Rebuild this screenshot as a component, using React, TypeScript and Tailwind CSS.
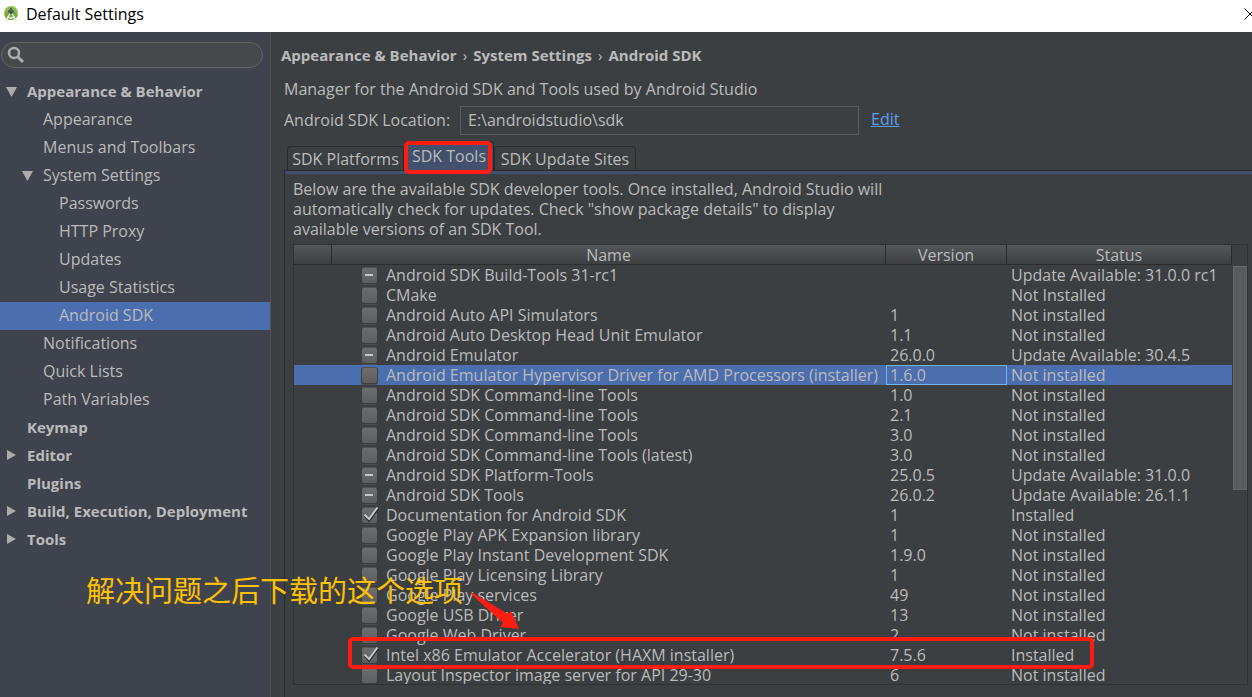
import { useState } from "react";

type CheckState = "on" | "off" | "mixed";

const treeItems = [
  { label: "Appearance & Behavior", level: 0, arrow: "down" },
  { label: "Appearance", level: 1 },
  { label: "Menus and Toolbars", level: 1 },
  { label: "System Settings", level: 1, arrow: "down" },
  { label: "Passwords", level: 2 },
  { label: "HTTP Proxy", level: 2 },
  { label: "Updates", level: 2 },
  { label: "Usage Statistics", level: 2 },
  { label: "Android SDK", level: 2 },
  { label: "Notifications", level: 1 },
  { label: "Quick Lists", level: 1 },
  { label: "Path Variables", level: 1 },
  { label: "Keymap", level: 0 },
  { label: "Editor", level: 0, arrow: "right" },
  { label: "Plugins", level: 0 },
  { label: "Build, Execution, Deployment", level: 0, arrow: "right" },
  { label: "Tools", level: 0, arrow: "right" },
];

const tools: { name: string; version: string; status: string; check: CheckState }[] = [
  { name: "Android SDK Build-Tools 31-rc1", version: "", status: "Update Available: 31.0.0 rc1", check: "mixed" },
  { name: "CMake", version: "", status: "Not Installed", check: "off" },
  { name: "Android Auto API Simulators", version: "1", status: "Not installed", check: "off" },
  { name: "Android Auto Desktop Head Unit Emulator", version: "1.1", status: "Not installed", check: "off" },
  { name: "Android Emulator", version: "26.0.0", status: "Update Available: 30.4.5", check: "mixed" },
  { name: "Android Emulator Hypervisor Driver for AMD Processors (installer)", version: "1.6.0", status: "Not installed", check: "off" },
  { name: "Android SDK Command-line Tools", version: "1.0", status: "Not installed", check: "off" },
  { name: "Android SDK Command-line Tools", version: "2.1", status: "Not installed", check: "off" },
  { name: "Android SDK Command-line Tools", version: "3.0", status: "Not installed", check: "off" },
  { name: "Android SDK Command-line Tools (latest)", version: "3.0", status: "Not installed", check: "off" },
  { name: "Android SDK Platform-Tools", version: "25.0.5", status: "Update Available: 31.0.0", check: "mixed" },
  { name: "Android SDK Tools", version: "26.0.2", status: "Update Available: 26.1.1", check: "mixed" },
  { name: "Documentation for Android SDK", version: "1", status: "Installed", check: "on" },
  { name: "Google Play APK Expansion library", version: "1", status: "Not installed", check: "off" },
  { name: "Google Play Instant Development SDK", version: "1.9.0", status: "Not installed", check: "off" },
  { name: "Google Play Licensing Library", version: "1", status: "Not installed", check: "off" },
  { name: "Google Play services", version: "49", status: "Not installed", check: "off" },
  { name: "Google USB Driver", version: "13", status: "Not installed", check: "off" },
  { name: "Google Web Driver", version: "2", status: "Not installed", check: "off" },
  { name: "Intel x86 Emulator Accelerator (HAXM installer)", version: "7.5.6", status: "Installed", check: "on" },
  { name: "Layout Inspector image server for API 29-30", version: "6", status: "Not installed", check: "off" },
];

const levelPadding = ["pl-[5px]", "pl-[21px]", "pl-[37px]"];

const StudioLogo = () => (
  <svg className="h-4 w-4" viewBox="0 0 16 16" aria-hidden="true">
    <circle cx="8" cy="7" r="7" fill="#8bbd4e" />
    <path d="M1.5 9.5a7 7 0 0 0 13 0l-2.500-4H4z" fill="#76a83f" />
    <path d="M4.800 6.500a3.200 3.200 0 0 1 6.400 0z" fill="#5b5f60" />
    <path d="M7 2h2v3H7z" fill="#5b5f60" />
    <path d="M7.300 7 2.500 15.500M8.700 7l4.800 8.500" stroke="#dfe4df" strokeWidth="1.500" fill="none" />
    <path d="M4.500 10.500c2 1.600 5 1.600 7 0" stroke="#f5f7f5" strokeWidth="1.500" fill="none" />
    <circle cx="8" cy="6.500" r="1.800" fill="#4d5253" />
  </svg>
);

const Checkbox = ({ id, state }: { id: string; state: CheckState }) => {
  const [value, setValue] = useState(state);

  return (
    <span className="relative block h-[17px] w-[17px] shrink-0">
      <input
        id={id}
        type="checkbox"
        checked={value === "on"}
        onChange={(e) => setValue(e.target.checked ? "on" : "off")}
        ref={(el) => {
          if (el) el.indeterminate = value === "mixed";
        }}
        className="block h-[17px] w-[17px] appearance-none rounded-[3px] border border-[#3a3c3d] border-t-[#505354] bg-linear-to-b from-[#6d6d6d] to-[#5e5e5e] shadow-[0_1px_0_#4b4d4f]"
      />
      {value === "mixed" && <span className="pointer-events-none absolute left-1 top-[7px] h-[2px] w-2 bg-[#c4c4c4]" />}
      {value === "on" && (
        <svg className="pointer-events-none absolute -top-px left-0 h-[18px] w-[19px]" viewBox="0 0 19 18" fill="none" aria-hidden="true">
          <path d="M4 9.500 8 14.500 17 2.500" stroke="#2b2b2b" strokeWidth="2.500" />
          <path d="M3.500 8.500 8 13 16.500 1.500" stroke="#c8c8c8" strokeWidth="2" />
        </svg>
      )}
    </span>
  );
};

const Sidebar = () => (
  <nav className="w-[271px] shrink-0 border-r border-[#515354] bg-[#3f434d] pt-[10px]">
    <label className="ml-px mr-[7px] flex h-[26px] items-center rounded-full border border-[#646464] bg-[#45494a] pl-[5px]">
      <svg className="h-[18px] w-[18px] shrink-0" viewBox="0 0 18 18" fill="none" stroke="#adadad" aria-hidden="true">
        <circle cx="7" cy="7" r="5" strokeWidth="2.500" />
        <path d="m10.500 10.500 5.500 5.500" strokeWidth="3" />
      </svg>
      <input type="text" aria-label="Search settings" className="ml-1 w-full bg-transparent pr-3 outline-none" />
    </label>
    <ul className="mt-[10px]">
      {treeItems.map((item) => (
        <li key={item.label}>
          <button
            type="button"
            className={`flex h-7 w-full items-center pb-[2px] text-left ${levelPadding[item.level]} ${
              item.level === 0 ? "text-[15px] font-bold" : ""
            } ${item.label === "Android SDK" ? "bg-[#4b6eaf]" : ""}`}
          >
            <span className="w-[22px] shrink-0">
              {item.arrow === "down" && (
                <svg className="h-3 w-3" viewBox="0 0 12 12" fill="#adadad" aria-hidden="true">
                  <path d="M1 2h11L6.500 12z" />
                </svg>
              )}
              {item.arrow === "right" && (
                <svg className="h-3 w-3" viewBox="0 0 12 12" fill="#adadad" aria-hidden="true">
                  <path d="M2 1v10l9-5z" />
                </svg>
              )}
            </span>
            {item.label}
          </button>
        </li>
      ))}
    </ul>
  </nav>
);

const ToolsTable = () => (
  <div className="mr-1 flex min-h-0 flex-1 overflow-hidden border border-[#2f3132]">
    <table className="w-full table-fixed border-separate border-spacing-0 self-start">
      <colgroup>
        <col className="w-[38px]" />
        <col />
        <col className="w-[121px]" />
        <col className="w-[225px]" />
      </colgroup>
      <thead>
        <tr className="h-5 bg-linear-to-b from-[#55585a] to-[#3c3e3f] shadow-[inset_0_-1px_0_#2b2b2b]">
          <th className="border-r border-[#2b2b2b] p-0" aria-label="Marker" />
          <th className="border-r border-[#2b2b2b] p-0 font-normal">Name</th>
          <th className="border-r border-[#2b2b2b] p-0 font-normal">Version</th>
          <th className="border-r border-[#2b2b2b] p-0 font-normal">Status</th>
        </tr>
      </thead>
      <tbody>
        {tools.map((tool, index) => {
          const selected = tool.version === "1.6.0";
          return (
            <tr key={index} className={`h-5 ${selected ? "bg-[#4b6eaf]" : ""}`}>
              <td className="p-0" />
              <td className="p-0">
                <div className="flex h-5 items-center pl-[29px]">
                  <Checkbox id={`tool-${index}`} state={tool.check} />
                  <label htmlFor={`tool-${index}`} className="pl-2 whitespace-nowrap">
                    {tool.name}
                  </label>
                </div>
              </td>
              <td className={`p-0 pl-1 ${selected ? "shadow-[inset_0_0_0_1px_#6eb5f9]" : ""}`}>{tool.version}</td>
              <td className="p-0 pl-1 whitespace-nowrap">{tool.status}</td>
            </tr>
          );
        })}
      </tbody>
    </table>
    <div className="w-[15px] shrink-0 pt-[21px] pl-px">
      <div className="h-[224px] w-[14px] border border-[#646667] bg-[#595b5d]" />
    </div>
  </div>
);

const SdkPanel = () => (
  <main className="flex min-w-0 flex-1 flex-col pb-3">
    <h1 className="mt-[13px] ml-[10px] flex gap-[6px] text-[15px] font-bold">
      <span>Appearance &amp; Behavior</span>
      <span className="font-normal">›</span>
      <span>System Settings</span>
      <span className="font-normal">›</span>
      <span>Android SDK</span>
    </h1>
    <p className="mt-[14px] ml-[13px]">Manager for the Android SDK and Tools used by Android Studio</p>
    <div className="mt-[7px] ml-[13px] flex items-center">
      <label htmlFor="sdk-location" className="w-44 shrink-0 pb-px">
        Android SDK Location:
      </label>
      <input
        id="sdk-location"
        type="text"
        readOnly
        value="E:\androidstudio\sdk"
        className="h-[29px] w-[399px] border border-[#5a5d5f] px-[7px] pb-px outline-none"
      />
      <a href="#edit" className="ml-3 pb-[3px] text-[#589df6] underline">
        Edit
      </a>
    </div>

    <div role="tablist" className="mt-[6px] ml-4 flex items-end whitespace-nowrap">
      <button type="button" role="tab" className="h-6 w-[117px] rounded-t-[4px] border border-b-0 border-[#2b2b2b]">
        SDK Platforms
      </button>
      <button type="button" role="tab" aria-selected="true" className="relative h-[29px] w-[90px] rounded-t-[4px] border border-b-0 border-[#2b2b2b] bg-[#41506d]">
        SDK Tools
        <span className="absolute -top-px -left-px h-[33px] w-[88px] rounded-[5px] border-4 border-[#ff1d12]" />
      </button>
      <button type="button" role="tab" className="h-6 w-[142px] rounded-t-[4px] border border-b-0 border-[#2b2b2b]">
        SDK Update Sites
      </button>
    </div>

    <section className="ml-[13px] -mb-3 flex min-h-0 flex-1 flex-col border-t border-l border-[#2b2b2b] pb-3">
      <div className="h-[3px] shrink-0 bg-[#41506d]" />
      <p className="mt-[5px] mb-[5px] ml-2 max-w-[600px]">
        Below are the available SDK developer tools. Once installed, Android Studio will
        <br />
        automatically check for updates. Check "show package details" to display
        <br />
        available versions of an SDK Tool.
      </p>
      <div className="ml-2 flex min-h-0 flex-1">
        <ToolsTable />
      </div>
    </section>
  </main>
);

const Annotations = () => (
  <div className="pointer-events-none absolute inset-0">
    <p className="absolute top-[571px] left-[86px] text-[29px] leading-10 whitespace-nowrap text-[#ffc000]">
      解决问题之后下载的这个选项
    </p>
    <svg className="absolute top-[592px] left-[468px] h-[40px] w-[54px]" viewBox="0 0 54 40" fill="#ff1d12" aria-hidden="true">
      <path d="M2 1 5 1 40 22 43 19 51 37 32 35 35 31z" />
    </svg>
    <div className="absolute top-[637px] left-[348px] h-[32px] w-[746px] rounded-[5px] border-4 border-[#ff1d12]" />
  </div>
);

const App = () => {
  return (
    <div className="relative flex h-screen flex-col overflow-hidden bg-[#3c3f41] font-['Open_Sans','Noto_Sans_CJK_SC',sans-serif] text-base leading-5 text-[#bbbbbb]">
      <header className="flex h-8 shrink-0 items-center bg-white pb-[5px] pl-[3px] text-black">
        <StudioLogo />
        <span className="ml-[7px]">Default Settings</span>
        <button type="button" aria-label="Close" className="-mr-1 ml-auto">
          <svg className="h-3 w-3" viewBox="0 0 12 12" stroke="#000" aria-hidden="true">
            <path d="m.5.5 11 11M11.500.5l-11 11" />
          </svg>
        </button>
      </header>
      <div className="flex min-h-0 flex-1">
        <Sidebar />
        <SdkPanel />
      </div>
      <Annotations />
    </div>
  );
};

export default App;
